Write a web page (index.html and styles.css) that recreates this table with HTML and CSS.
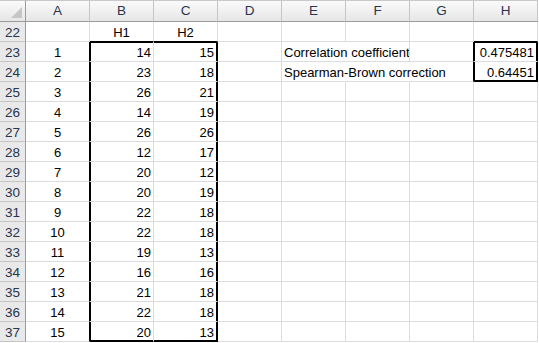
FILE: index.html
```html
<!DOCTYPE html>
<html lang="en">
<head>
    <meta charset="UTF-8">
    <title>Split-half reliability</title>
    <link rel="stylesheet" href="styles.css">
</head>
<body>
    <div class="sheet">
        <!-- column headers -->
        <div class="corner"><span class="tri"></span></div>
        <div class="ch">A</div>
        <div class="ch">B</div>
        <div class="ch">C</div>
        <div class="ch">D</div>
        <div class="ch">E</div>
        <div class="ch">F</div>
        <div class="ch">G</div>
        <div class="ch">H</div>

        <!-- row 22 -->
        <div class="rh">22</div>
        <div></div>
        <div class="ctr kb">H1</div>
        <div class="ctr kb">H2</div>
        <div></div><div></div><div></div><div></div>
        <div class="kb"></div>

        <!-- row 23 -->
        <div class="rh">23</div>
        <div class="ctr kr">1</div>
        <div class="num tl">14</div>
        <div class="num tr kr">15</div>
        <div></div>
        <div class="txt nr">Correlation coefficient</div>
        <div></div>
        <div class="kr"></div>
        <div class="num htop kr">0.475481</div>

        <!-- row 24 -->
        <div class="rh">24</div>
        <div class="ctr kr">2</div>
        <div class="num l">23</div>
        <div class="num r kr">18</div>
        <div></div>
        <div class="txt nr">Spearman-Brown correction</div>
        <div class="nr"></div>
        <div class="kr"></div>
        <div class="num hbot kr kb">0.64451</div>

        <div class="rh">25</div>
        <div class="ctr kr">3</div>
        <div class="num l">26</div>
        <div class="num r kr">21</div>
        <div></div><div></div><div></div><div></div><div></div>

        <div class="rh">26</div>
        <div class="ctr kr">4</div>
        <div class="num l">14</div>
        <div class="num r kr">19</div>
        <div></div><div></div><div></div><div></div><div></div>

        <div class="rh">27</div>
        <div class="ctr kr">5</div>
        <div class="num l">26</div>
        <div class="num r kr">26</div>
        <div></div><div></div><div></div><div></div><div></div>

        <div class="rh">28</div>
        <div class="ctr kr">6</div>
        <div class="num l">12</div>
        <div class="num r kr">17</div>
        <div></div><div></div><div></div><div></div><div></div>

        <div class="rh">29</div>
        <div class="ctr kr">7</div>
        <div class="num l">20</div>
        <div class="num r kr">12</div>
        <div></div><div></div><div></div><div></div><div></div>

        <div class="rh">30</div>
        <div class="ctr kr">8</div>
        <div class="num l">20</div>
        <div class="num r kr">19</div>
        <div></div><div></div><div></div><div></div><div></div>

        <div class="rh">31</div>
        <div class="ctr kr">9</div>
        <div class="num l">22</div>
        <div class="num r kr">18</div>
        <div></div><div></div><div></div><div></div><div></div>

        <div class="rh">32</div>
        <div class="ctr kr">10</div>
        <div class="num l">22</div>
        <div class="num r kr">18</div>
        <div></div><div></div><div></div><div></div><div></div>

        <div class="rh">33</div>
        <div class="ctr kr">11</div>
        <div class="num l">19</div>
        <div class="num r kr">13</div>
        <div></div><div></div><div></div><div></div><div></div>

        <div class="rh">34</div>
        <div class="ctr kr">12</div>
        <div class="num l">16</div>
        <div class="num r kr">16</div>
        <div></div><div></div><div></div><div></div><div></div>

        <div class="rh">35</div>
        <div class="ctr kr">13</div>
        <div class="num l">21</div>
        <div class="num r kr">18</div>
        <div></div><div></div><div></div><div></div><div></div>

        <div class="rh">36</div>
        <div class="ctr kr">14</div>
        <div class="num l">22</div>
        <div class="num r kr">18</div>
        <div></div><div></div><div></div><div></div><div></div>

        <div class="rh">37</div>
        <div class="ctr kr">15</div>
        <div class="num bl kb">20</div>
        <div class="num br kr kb">13</div>
        <div></div><div></div><div></div><div></div><div></div>
    </div>
</body>
</html>
```

FILE: styles.css
```css
body {
    margin: 0;
    background: #fff;
    font-family: "Liberation Sans", Arial, sans-serif;
    font-size: 13px;
    color: #000;
}

.sheet {
    display: grid;
    grid-template-columns: 26px repeat(8, 64px);
    grid-template-rows: 22px;
    grid-auto-rows: 20px;
}

.sheet > div {
    box-sizing: border-box;
    border-right: 1px solid #dadcdd;
    border-bottom: 1px solid #dadcdd;
    padding: 1px 2px 0;
    line-height: 20px;
    white-space: nowrap;
}

/* headers */
.sheet > .corner,
.sheet > .ch {
    background: linear-gradient(#fafafa, #e6e6e6);
    border-top: 1px solid #c9c9c9;
    border-right-color: #c5c5c5;
    border-bottom-color: #9b9b9b;
    color: #27354d;
    font-size: 13.5px;
    text-align: center;
    padding-top: 0;
    line-height: 20px;
}
.sheet > .corner {
    display: flex;
    justify-content: flex-end;
    align-items: flex-end;
    border-right-color: #9b9b9b;
}
.tri {
    width: 0;
    height: 0;
    border-left: 11px solid transparent;
    border-bottom: 11px solid #c6c6c6;
    margin: 0 1px 3px 0;
}
.sheet > .rh {
    background: #e9e9e9;
    border-right-color: #9b9b9b;
    border-bottom-color: #c5c5c5;
    color: #27354d;
    font-size: 13.5px;
    text-align: center;
    padding: 1px 0 0;
}

/* cell alignment */
.ctr { text-align: center; }
.num { text-align: right; }
.txt { text-align: left; }

/* borders */
.sheet > .kr { border-right-color: #000; }
.sheet > .kb { border-bottom-color: #000; }
.sheet > .nr { border-right-color: transparent; }

.tl { box-shadow: inset 1px 1px 0 #000; }
.tr { box-shadow: inset -1px 1px 0 #000; }
.l { box-shadow: inset 1px 0 0 #000; }
.r { box-shadow: inset -1px 0 0 #000; }
.bl { box-shadow: inset 1px -1px 0 #000; }
.br { box-shadow: inset -1px -1px 0 #000; }
.htop { box-shadow: inset 1px 1px 0 #000, inset -1px 0 0 #000; }
.hbot { box-shadow: inset 1px -1px 0 #000, inset -1px 0 0 #000; }
.num.r, .num.tr, .num.br, .num.htop, .num.hbot { padding-right: 3px; }
```
